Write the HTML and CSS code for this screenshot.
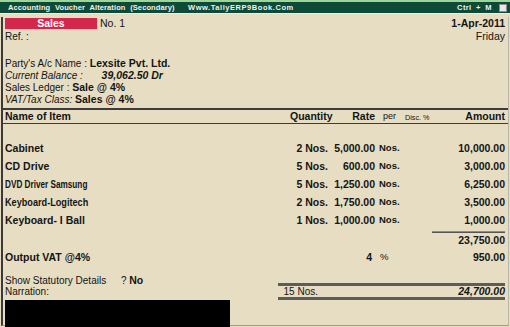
FILE: index.html
```html
<!DOCTYPE html>
<html lang="en">
<head>
  <meta charset="UTF-8">
  <title>Accounting Voucher Alteration</title>
  <link rel="stylesheet" href="styles.css">
</head>
<body>
  <div class="titlebar">
    <span class="title">Accounting Voucher Alteration (Secondary)</span>
    <span class="site">Www.TallyERP9Book.Com</span>
    <span class="keys">Ctrl + M</span>
    <span class="winbox"></span>
  </div>

  <div class="voucher">
    <div class="head">
      <div class="head-left">
        <div class="line">
          <span class="vtype">Sales</span>
          <span class="vno">No. 1</span>
        </div>
        <div class="line">Ref. :</div>
      </div>
      <div class="head-right">
        <div class="line date">1-Apr-2011</div>
        <div class="line">Friday</div>
      </div>
    </div>

    <div class="party">
      <div class="line">Party's A/c Name : <b>Lexsite Pvt. Ltd.</b></div>
      <div class="line"><i>Current Balance :</i> <b class="balance">39,062.50 Dr</b></div>
      <div class="line">Sales Ledger : <b>Sale @ 4%</b></div>
      <div class="line"><i>VAT/Tax Class:</i> <b>Sales @ 4%</b></div>
    </div>

    <div class="grid colhead">
      <span>Name of Item</span>
      <span class="num qty-h">Quantity</span>
      <span class="num">Rate</span>
      <span class="per-h">per</span>
      <span><span class="disc-h">Disc. %</span></span>
      <span class="num">Amount</span>
    </div>

    <div class="items">
      <div class="grid item">
        <span>Cabinet</span>
        <span class="num">2 Nos.</span>
        <span class="num">5,000.00</span>
        <span class="per">Nos.</span>
        <span></span>
        <span class="num">10,000.00</span>
      </div>
      <div class="grid item">
        <span>CD Drive</span>
        <span class="num">5 Nos.</span>
        <span class="num">600.00</span>
        <span class="per">Nos.</span>
        <span></span>
        <span class="num">3,000.00</span>
      </div>
      <div class="grid item">
        <span><span class="squeeze tight">DVD Driver Samsung</span></span>
        <span class="num">5 Nos.</span>
        <span class="num">1,250.00</span>
        <span class="per">Nos.</span>
        <span></span>
        <span class="num">6,250.00</span>
      </div>
      <div class="grid item">
        <span><span class="squeeze">Keyboard-Logitech</span></span>
        <span class="num">2 Nos.</span>
        <span class="num">1,750.00</span>
        <span class="per">Nos.</span>
        <span></span>
        <span class="num">3,500.00</span>
      </div>
      <div class="grid item">
        <span>Keyboard- I Ball</span>
        <span class="num">1 Nos.</span>
        <span class="num">1,000.00</span>
        <span class="per">Nos.</span>
        <span></span>
        <span class="num">1,000.00</span>
      </div>
    </div>

    <div class="grid subtotal">
      <span></span><span></span><span></span><span></span><span></span>
      <span class="num">23,750.00</span>
    </div>

    <div class="grid tax">
      <span>Output VAT @4%</span>
      <span></span>
      <span class="num tax-rate">4</span>
      <span class="per">%</span>
      <span></span>
      <span class="num">950.00</span>
    </div>

    <div class="footer">
      <div class="footer-left">
        <div class="line">Show Statutory Details <span class="ask">?</span> <b>No</b></div>
        <div class="line">Narration:</div>
        <div class="narration"></div>
      </div>
      <div class="totals">
        <span class="total-qty">15 Nos.</span>
        <span class="total-amt">24,700.00</span>
      </div>
    </div>
  </div>
</body>
</html>
```

FILE: styles.css
```css
body {
  margin: 0;
  width: 510px;
  height: 327px;
  overflow: hidden;
  background-color: #e6ddc2;
  color: #141414;
  font-family: 'Liberation Sans', Arial, sans-serif;
  font-size: 10px;
}
b {
  font-size: 10.5px;
}

/* green title strip */
.titlebar {
  display: flex;
  align-items: center;
  height: 11px;
  border-top: 2px solid #9fd49a;
  border-bottom: 1px solid #f2ecd9;
  background-color: #0d4a37;
  color: #eef4ee;
  font-size: 7.5px;
  font-weight: bold;
  padding-left: 8px;
  padding-right: 3px;
}
.title {
  width: 180px;
  letter-spacing: 0.1px;
  word-spacing: 2.5px;
}
.site {
  flex: 1;
  letter-spacing: 0.55px;
}
.keys {
  margin-right: 7px;
  letter-spacing: 0.4px;
  word-spacing: 2px;
}
.winbox {
  width: 6px;
  height: 6px;
  background-color: #e8e8e8;
  border: 1px solid #8c8c8c;
}

.voucher {
  height: 308px;
  margin: 0 1px 0 1px;
  padding: 0 3px 0 2px;
  border-left: 2px solid #3a3a3a;
  border-right: 1px solid #b9b6ab;
  border-bottom: 1px solid #9c9a92;
}
.line {
  height: 12px;
  line-height: 12px;
  white-space: nowrap;
}

.head {
  display: flex;
  justify-content: space-between;
  margin-top: 3px;
}
.head .line {
  display: flex;
  align-items: center;
  height: 13px;
  line-height: 13px;
}
.head-right .line {
  justify-content: flex-end;
  font-size: 10.5px;
}
.vtype {
  width: 92px;
  height: 11px;
  line-height: 11px;
  background-color: #d4274c;
  color: #ffffff;
  font-size: 10.5px;
  font-weight: bold;
  text-align: center;
}
.vno {
  margin-left: 3px;
  font-size: 10.5px;
}
.date {
  font-weight: bold;
}

.party {
  margin-top: 14px;
}
.balance {
  margin-left: 16px;
  font-style: italic;
}

/* item columns */
.grid {
  display: grid;
  grid-template-columns: 285px 38px 47px 27px 30px 1fr;
  white-space: nowrap;
}
.num {
  text-align: right;
}
.colhead {
  margin: 3px -3px 0 -2px;
  padding: 0 3px 0 2px;
  height: 13px;
  line-height: 13px;
  border-top: 2px solid #3c3c3c;
  border-bottom: 1px solid #3c3c3c;
  font-size: 10.5px;
  font-weight: bold;
}
.qty-h {
  padding-right: 3px;
}
.per-h {
  padding-left: 8px;
  font-size: 9px;
  font-weight: normal;
}
.disc-h {
  display: inline-block;
  font-size: 8px;
  font-weight: normal;
  transform: scaleX(0.9);
  transform-origin: left center;
  margin-left: 3px;
}
.items {
  margin-top: 15px;
}
.item {
  height: 18px;
  line-height: 18px;
  font-size: 10.5px;
  font-weight: bold;
}
.per {
  padding-left: 4px;
  font-size: 9.5px;
  font-weight: bold;
}
.squeeze {
  display: inline-block;
  transform: scaleX(0.87);
  transform-origin: left center;
}
.squeeze.tight {
  transform: scaleX(0.78);
}

.subtotal {
  margin-top: 2px;
  line-height: 12px;
  font-size: 10.5px;
  font-weight: bold;
}
.subtotal .num {
  border-top: 1px solid #8c8c84;
  box-shadow: inset 0 1px 0 #555;
  padding-top: 2px;
}
.tax {
  margin-top: 5px;
  height: 12px;
  line-height: 12px;
  font-size: 10.5px;
  font-weight: bold;
}
.tax-rate {
  padding-right: 3px;
}
.tax .per {
  padding-left: 5px;
  font-weight: normal;
}

.footer {
  display: flex;
}
.footer-left {
  width: 273px;
  margin-top: 11px;
}
.ask {
  margin-left: 12px;
}
.narration {
  width: 225px;
  height: 27px;
  margin-top: 2px;
  background-color: #000000;
}
.totals {
  flex: 1;
  display: flex;
  align-self: flex-start;
  margin-top: 20px;
  height: 11px;
  line-height: 11px;
  border-top: 3px solid #5c5c58;
  border-bottom: 3px solid #5c5c58;
}
.total-qty {
  width: 40px;
  text-align: right;
}
.total-amt {
  flex: 1;
  text-align: right;
  font-size: 10.5px;
  font-weight: bold;
  font-style: italic;
}
```
